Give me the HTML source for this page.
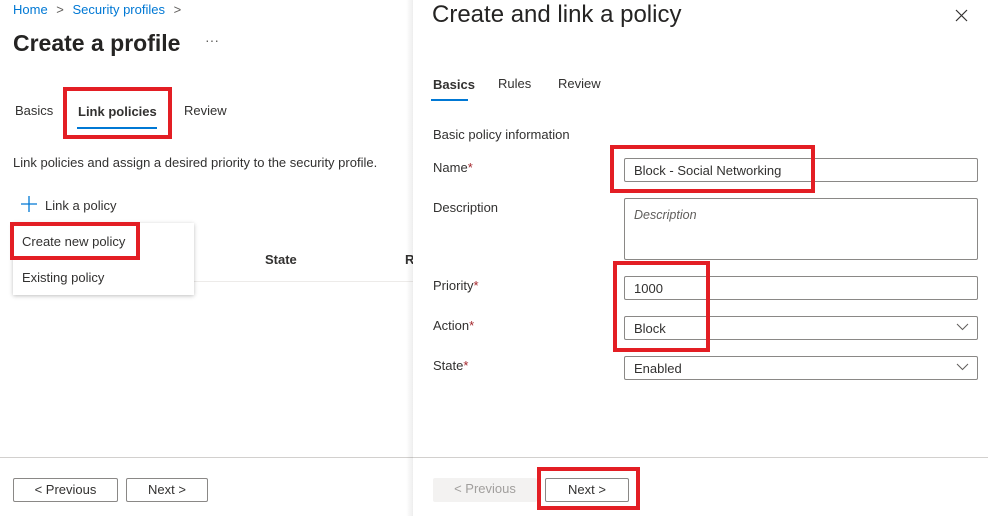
<!DOCTYPE html>
<html><head><style>
*{box-sizing:border-box;margin:0;padding:0}
body{width:988px;height:516px;overflow:hidden;background:#fff;font-family:"Liberation Sans",sans-serif;color:#323130;font-size:13px;position:relative}
.a{position:absolute;white-space:nowrap}
.red{position:absolute;border:4px solid #e31e24}
.inp{position:absolute;border:1px solid #8a8886;border-radius:2px;background:#fff;padding-left:9px;font-size:13px;color:#323130}
.btn{position:absolute;border:1px solid #8a8886;border-radius:2px;background:#fff;text-align:center;font-size:13px;line-height:22px;color:#323130}
.req{color:#a4262c}
.chev{position:absolute;right:8px;top:6px}
</style></head><body>
<div class="a" style="left:13px;top:2px;color:#0078d4;font-size:13px">Home <span style="color:#605e5c;margin:0 5px">&gt;</span> Security profiles <span style="color:#605e5c;margin-left:5px">&gt;</span></div>
<div class="a" style="left:13px;top:30px;font-size:23px;font-weight:bold;color:#252423">Create a profile</div>
<div class="a" style="left:205px;top:32px;font-size:14px;color:#605e5c">···</div>
<div class="a" style="left:15px;top:103px">Basics</div>
<div class="a" style="left:78px;top:104px;font-weight:bold">Link policies</div>
<div class="a" style="left:77px;top:127px;width:80px;height:2px;background:#0078d4"></div>
<div class="red" style="left:63px;top:87px;width:109px;height:52px"></div>
<div class="a" style="left:184px;top:103px">Review</div>
<div class="a" style="left:13px;top:155px;font-size:13px">Link policies and assign a desired priority to the security profile.</div>
<svg class="a" style="left:21px;top:196px" width="16" height="16"><path d="M8 0V16M0 8H16" stroke="#0078d4" stroke-width="1.3"/></svg>
<div class="a" style="left:45px;top:198px">Link a policy</div>
<div class="a" style="left:265px;top:252px;font-weight:bold">State</div>
<div class="a" style="left:405px;top:252px;font-weight:bold">R</div>
<div class="a" style="left:14px;top:281px;width:400px;height:1px;background:#edebe9"></div>
<div class="a" style="left:13px;top:223px;width:181px;height:72px;background:#fff;box-shadow:0 1px 4px rgba(0,0,0,.25)"></div>
<div class="a" style="left:22px;top:234px">Create new policy</div>
<div class="red" style="left:10px;top:222px;width:130px;height:38px"></div>
<div class="a" style="left:22px;top:270px">Existing policy</div>
<div class="a" style="left:0;top:457px;width:413px;height:1px;background:#d2d0ce"></div>
<div class="btn" style="left:13px;top:478px;width:105px;height:24px">&lt; Previous</div>
<div class="btn" style="left:126px;top:478px;width:82px;height:24px">Next &gt;</div>

<div class="a" style="left:406px;top:0;width:8px;height:516px;background:linear-gradient(to right,rgba(0,0,0,0),rgba(0,0,0,.08))"></div>
<div class="a" style="left:413px;top:0;width:575px;height:516px;background:#fff"></div>
<div class="a" style="left:432px;top:1px;font-size:24px;color:#252423">Create and link a policy</div>
<svg class="a" style="left:955px;top:9px" width="13" height="13"><path d="M1 1L12 12M12 1L1 12" stroke="#323130" stroke-width="1.2"/></svg>
<div class="a" style="left:433px;top:77px;font-weight:bold">Basics</div>
<div class="a" style="left:431px;top:99px;width:37px;height:2px;background:#0078d4"></div>
<div class="a" style="left:498px;top:76px">Rules</div>
<div class="a" style="left:558px;top:76px">Review</div>
<div class="a" style="left:433px;top:127px;font-size:13px">Basic policy information</div>
<div class="a" style="left:433px;top:160px">Name<span class="req">*</span></div>
<div class="inp" style="left:624px;top:158px;width:354px;height:24px;line-height:24px">Block - Social Networking</div>
<div class="red" style="left:610px;top:145px;width:205px;height:48px"></div>
<div class="a" style="left:433px;top:200px">Description</div>
<div class="inp" style="left:624px;top:198px;width:354px;height:62px;padding-top:9px;font-style:italic;color:#605e5c;font-size:12.5px">Description</div>
<div class="a" style="left:433px;top:278px">Priority<span class="req">*</span></div>
<div class="inp" style="left:624px;top:276px;width:354px;height:24px;line-height:24px">1000</div>
<div class="a" style="left:433px;top:318px">Action<span class="req">*</span></div>
<div class="inp" style="left:624px;top:316px;width:354px;height:24px;line-height:24px">Block<svg class="chev" width="13" height="8"><path d="M1 1L6.5 6.5L12 1" stroke="#605e5c" fill="none"/></svg></div>
<div class="red" style="left:613px;top:261px;width:97px;height:91px"></div>
<div class="a" style="left:433px;top:358px">State<span class="req">*</span></div>
<div class="inp" style="left:624px;top:356px;width:354px;height:24px;line-height:24px">Enabled<svg class="chev" width="13" height="8"><path d="M1 1L6.5 6.5L12 1" stroke="#605e5c" fill="none"/></svg></div>
<div class="a" style="left:413px;top:457px;width:575px;height:1px;background:#d2d0ce"></div>
<div class="btn" style="left:433px;top:478px;width:104px;height:24px;border:none;background:#f3f2f1;color:#a19f9d">&lt; Previous</div>
<div class="btn" style="left:545px;top:478px;width:84px;height:24px">Next &gt;</div>
<div class="red" style="left:537px;top:467px;width:103px;height:43px"></div>
</body></html>
